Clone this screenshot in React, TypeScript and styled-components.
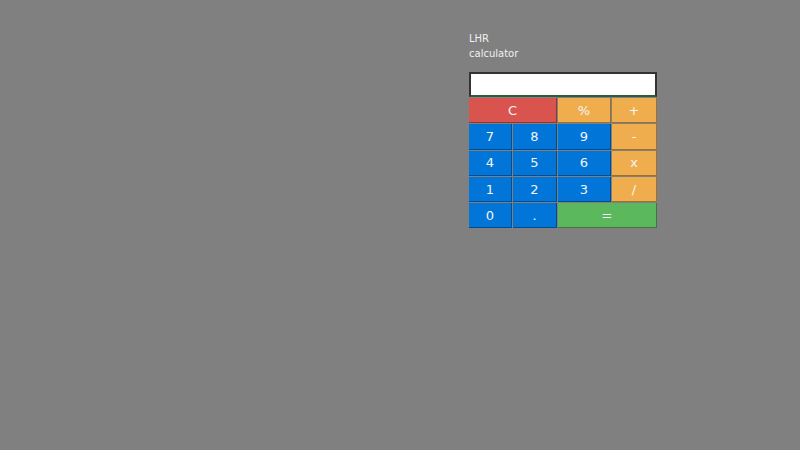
import styled, { createGlobalStyle } from "styled-components";

const GlobalStyle = createGlobalStyle`
    html, body {
        margin: 0;
        padding: 0;
        background: #808080;
        font-family: "DejaVu Sans", sans-serif;
    }
`;

type Kind = "clear" | "op" | "num" | "eq";

const colors: Record<Kind, string> = {
    clear: "#d9534f",
    op: "#f0ad4e",
    num: "#0275d8",
    eq: "#5cb85c",
};

const keys: Array<{ label: string; kind: Kind; span?: number }> = [
    { label: "C", kind: "clear", span: 2 },
    { label: "%", kind: "op" },
    { label: "+", kind: "op" },
    { label: "7", kind: "num" },
    { label: "8", kind: "num" },
    { label: "9", kind: "num" },
    { label: "-", kind: "op" },
    { label: "4", kind: "num" },
    { label: "5", kind: "num" },
    { label: "6", kind: "num" },
    { label: "x", kind: "op" },
    { label: "1", kind: "num" },
    { label: "2", kind: "num" },
    { label: "3", kind: "num" },
    { label: "/", kind: "op" },
    { label: "0", kind: "num" },
    { label: ".", kind: "num" },
    { label: "=", kind: "eq", span: 2 },
];

export default function App() {
    return <>
        <GlobalStyle/>
        <Page>
            <Calculator>
                <Title>LHR<br/>calculator</Title>
                <Display type="text" readOnly/>
                <Keys>
                    {keys.map((key) => (
                        <Key key={key.label} kind={key.kind} span={key.span ?? 1}>
                            {key.label}
                        </Key>
                    ))}
                </Keys>
            </Calculator>
        </Page>
    </>;
}

const Page = styled.div`
    width: 800px;
    height: 450px;
    display: flex;
    padding: 31px 0 0 469px;
    box-sizing: border-box;
`;

const Calculator = styled.div`
    display: flex;
    flex-direction: column;
    width: 188px;
`;

const Title = styled.div`
    color: #f0f0f0;
    font-size: 10px;
    line-height: 15px;
    margin-bottom: 11px;
`;

const Display = styled.input`
    box-sizing: border-box;
    width: 188px;
    height: 25px;
    margin: 0;
    background: #ffffff;
    border: 2px solid #333333;
    border-bottom-color: #2f5a3b;
    outline: none;
`;

const Keys = styled.div`
    display: grid;
    grid-template-columns: 43px 44px 53px 45px;
    grid-auto-rows: 25.3px;
    gap: 1px;
    margin-top: 1px;
`;

const Key = styled.button<{ kind: Kind; span: number }>`
    grid-column: span ${(p) => p.span};
    background: ${(p) => colors[p.kind]};
    color: #f4f4f4;
    font-family: "DejaVu Sans", sans-serif;
    font-size: 13px;
    border: none;
    border-right: 1px solid rgba(0, 0, 0, 0.35);
    border-bottom: 1px solid rgba(0, 0, 0, 0.35);
    padding: 0;
    margin: 0;
    cursor: pointer;
`;
